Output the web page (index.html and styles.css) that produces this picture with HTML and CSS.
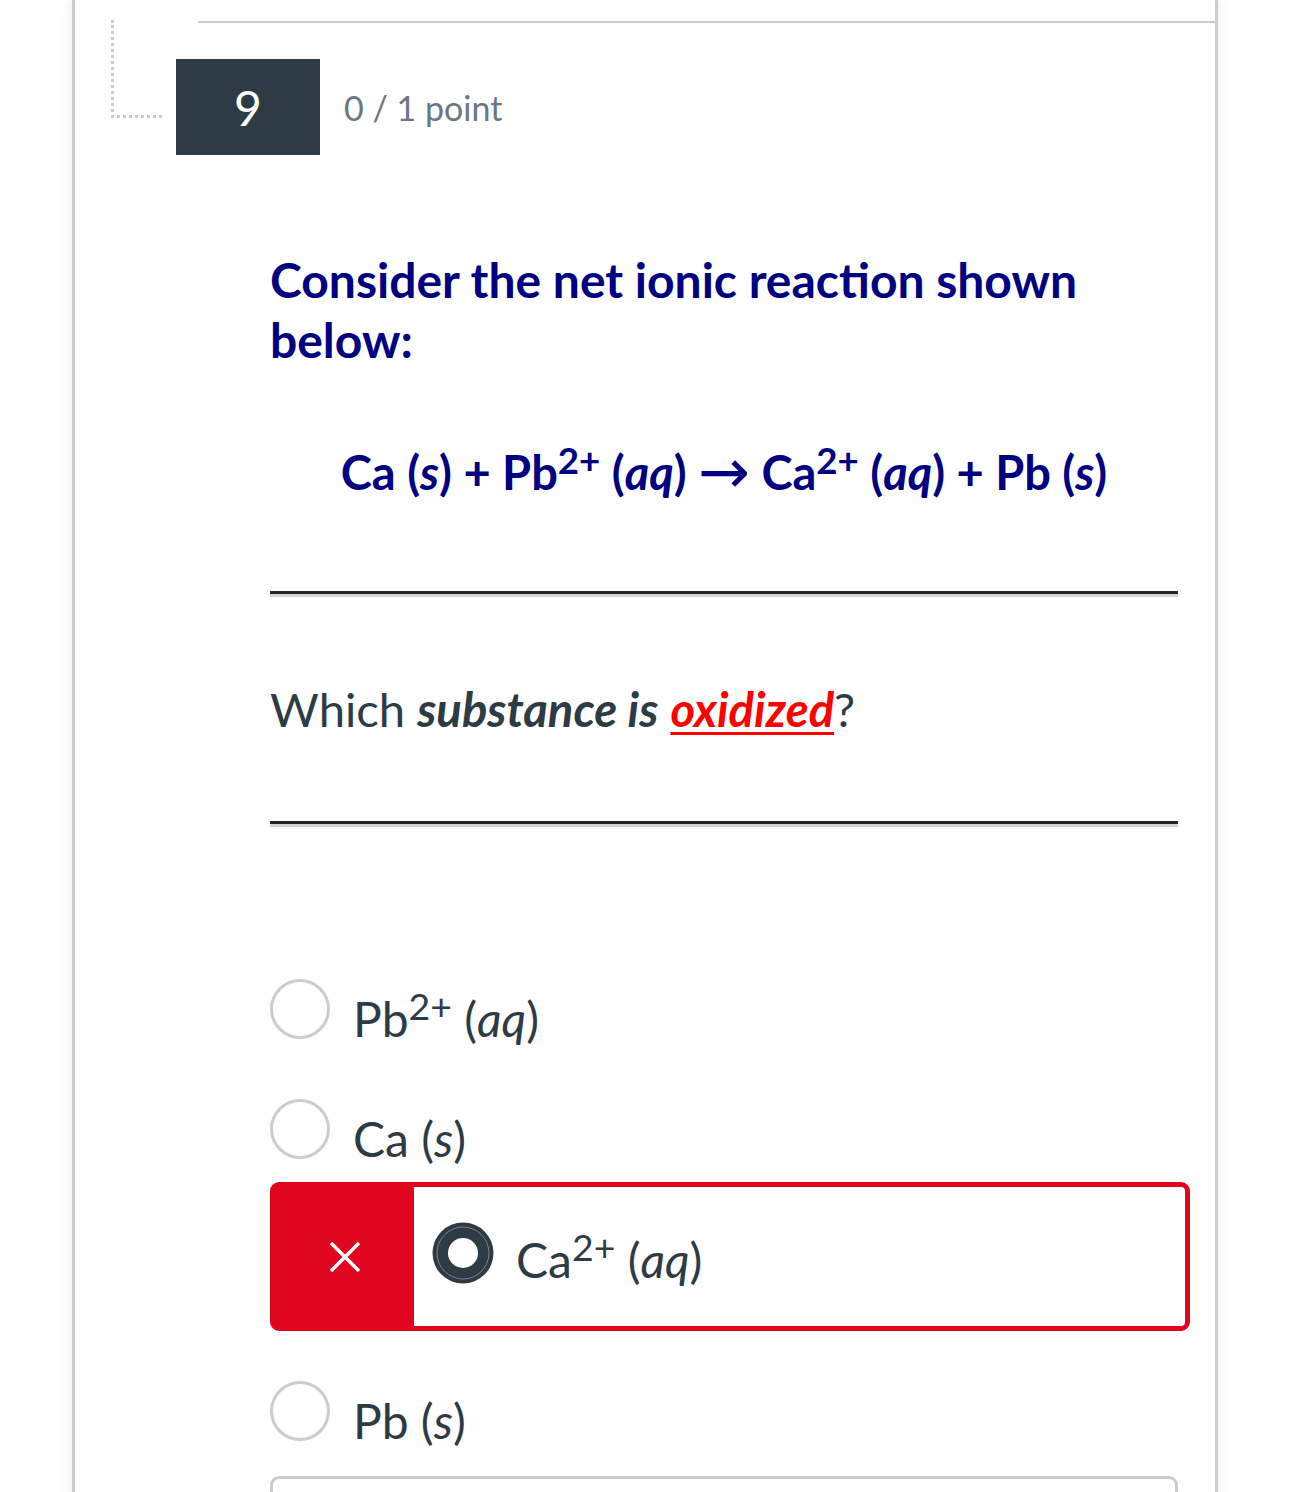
FILE: index.html
```html
<!DOCTYPE html>
<html lang="en">
<head>
<meta charset="utf-8">
<title>Question 9</title>
<link rel="stylesheet" href="styles.css">
</head>
<body>
<div class="card">
  <div class="head">
    <div class="tree"></div>
    <div class="qhead">
      <div class="topline"></div>
      <div class="numrow">
        <div class="num">9</div>
        <div class="pts">0 / 1 point</div>
      </div>
    </div>
  </div>
  <div class="qbody">
    <h2 class="prompt">Consider the net ionic reaction shown below:</h2>
    <p class="eq">Ca (<i>s</i>) + Pb<sup>2+</sup> (<i>aq</i>) <span class="arrow">→</span> Ca<sup>2+</sup> (<i>aq</i>) + Pb (<i>s</i>)</p>
    <hr class="rule">
    <p class="ask">Which <b><i>substance is</i></b> <b><i class="ox">oxidized</i></b>?</p>
    <hr class="rule">
    <div class="answers">
      <div class="answer">
        <span class="radio"></span>
        <span class="label">Pb<sup>2+</sup> (<i>aq</i>)</span>
      </div>
      <div class="answer">
        <span class="radio"></span>
        <span class="label">Ca (<i>s</i>)</span>
      </div>
      <div class="answer wrong">
        <div class="mark">
          <svg width="32" height="32" viewBox="0 0 32 32"><path d="M2 2 L30 30 M30 2 L2 30" stroke="#fff" stroke-width="3.5" fill="none"/></svg>
        </div>
        <div class="wrong-body">
          <svg class="radio-on" width="62" height="62" viewBox="0 0 62 62"><circle cx="31" cy="31" r="30.5" fill="#2d3b45"/><circle cx="31" cy="31" r="26" fill="none" stroke="#8a949b" stroke-width="0.8"/><circle cx="31" cy="31" r="15" fill="#fff"/></svg>
          <span class="label">Ca<sup>2+</sup> (<i>aq</i>)</span>
        </div>
      </div>
      <div class="answer">
        <span class="radio"></span>
        <span class="label">Pb (<i>s</i>)</span>
      </div>
    </div>
    <div class="next"></div>
  </div>
</div>
</body>
</html>
```

FILE: styles.css
```css
html, body {
  margin: 0;
  padding: 0;
  background: #ffffff;
  overflow: hidden;
}

body {
  font-family: Lato, "Noto Sans", sans-serif;
  color: #2d3b45;
}

.card {
  margin-left: 72px;
  width: 1140px;
  min-height: 1492px;
  border-left: 3px solid #c7cdd1;
  border-right: 3px solid #c7cdd1;
  box-shadow: 0 0 12px rgba(0, 0, 0, 0.09);
  padding-top: 20px;
  box-sizing: content-box;
}

.head {
  display: flex;
  align-items: flex-start;
}

.tree {
  flex: none;
  margin-left: 36px;
  width: 48px;
  height: 95px;
  border-left: 3px dotted #c7cdd1;
  border-bottom: 3px dotted #c7cdd1;
}

.qhead {
  flex: 1;
  margin-left: 14px;
}

.topline {
  margin-left: 22px;
  margin-top: 1px;
  height: 2px;
  background: #c7cdd1;
}

.numrow {
  margin-top: 36px;
  display: flex;
  align-items: center;
}

.num {
  width: 144px;
  height: 96px;
  background: #2d3b45;
  color: #ffffff;
  font-size: 48px;
  display: flex;
  align-items: center;
  justify-content: center;
}

.pts {
  margin-left: 24px;
  font-size: 34px;
  color: #6b7780;
}

.qbody {
  margin-left: 195px;
  margin-right: 37px;
}

.prompt {
  margin: 95px 0 0 0;
  font-size: 48px;
  line-height: 60px;
  font-weight: 700;
  color: #000080;
}

.eq {
  margin: 70px 0 0 0;
  text-align: center;
  font-size: 47px;
  line-height: 64px;
  font-weight: 700;
  color: #000080;
}

.arrow {
  font-family: "DejaVu Sans", sans-serif;
  font-weight: 400;
  font-size: 1.32em;
  line-height: 0;
  vertical-align: -3px;
}

sup {
  font-size: 0.78em;
  line-height: 0;
  vertical-align: 0.45em;
}

.rule {
  margin: 0;
  height: 0;
  border: 0;
  border-top: 3px solid #262626;
  border-bottom: 3px solid #d4d4d4;
}

.eq + .rule {
  margin-top: 87px;
}

.ask {
  margin: 82px 0 82px 0;
  font-size: 47.2px;
  line-height: 60px;
}

.ask b {
  font-weight: 700;
}

.ox {
  color: #ff0000;
  text-decoration: underline;
  text-decoration-thickness: 3px;
  text-underline-offset: 5px;
}

.answers {
  margin-top: 152px;
}

.answer {
  display: flex;
  align-items: flex-start;
}

.answer + .answer {
  margin-top: 60px;
}

.radio {
  flex: none;
  width: 54px;
  height: 54px;
  border: 3px solid #c7cdd1;
  border-radius: 50%;
}

.label {
  margin-left: 23px;
  margin-top: 10px;
  margin-bottom: -10px;
  font-size: 48px;
  line-height: 60px;
  white-space: nowrap;
}

.answer.wrong {
  margin-top: 23px;
  margin-right: -12px;
  height: 139px;
  border: 5px solid #e0061f;
  border-radius: 9px;
  align-items: stretch;
}

.answer.wrong + .answer {
  margin-top: 50px;
}

.mark {
  flex: none;
  width: 139px;
  background: #e0061f;
  display: flex;
  align-items: center;
  justify-content: center;
}

.wrong-body {
  flex: 1;
  display: flex;
  align-items: center;
  padding-left: 18px;
}

.radio-on {
  flex: none;
  margin-top: -8px;
}

.wrong-body .label {
  margin-top: 0;
  margin-bottom: 0;
  margin-left: 22px;
  padding-top: 6px;
}

.next {
  margin-top: 35px;
  height: 120px;
  border: 3px solid #c7cdd1;
  border-radius: 9px;
}
```
